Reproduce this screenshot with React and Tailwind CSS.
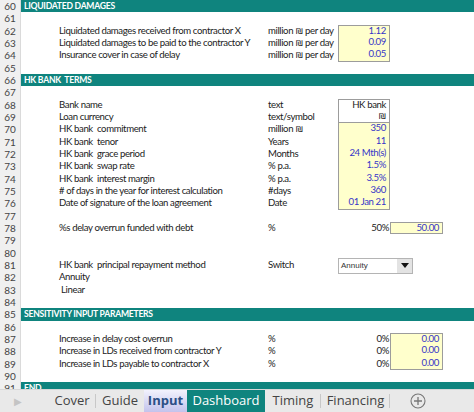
import React from "react";

const rows = [
  { n: 60, header: "LIQUIDATED DAMAGES" },
  { n: 61 },
  { n: 62, label: "Liquidated damages received from contractor X", unit: "million ₪ per day", b1: { v: "1.12", k: "y", top: true } },
  { n: 63, label: "Liquidated damages to be paid to the contractor Y", unit: "million ₪ per day", b1: { v: "0.09", k: "y" } },
  { n: 64, label: "Insurance cover in case of delay", unit: "million ₪ per day", b1: { v: "0.05", k: "y", bottom: true } },
  { n: 65 },
  { n: 66, header: "HK BANK  TERMS" },
  { n: 67 },
  { n: 68, label: "Bank name", unit: "text", b1: { v: "HK bank", k: "w", top: true } },
  { n: 69, label: "Loan currency", unit: "text/symbol", b1: { v: "₪", k: "w", bottom: true } },
  { n: 70, label: "HK bank  commitment", unit: "million ₪", b1: { v: "350", k: "y" } },
  { n: 71, label: "HK bank  tenor", unit: "Years", b1: { v: "11", k: "y" } },
  { n: 72, label: "HK bank  grace period", unit: "Months", b1: { v: "24 Mth(s)", k: "y" } },
  { n: 73, label: "HK bank  swap rate", unit: "% p.a.", b1: { v: "1.5%", k: "y" } },
  { n: 74, label: "HK bank  interest margin", unit: "% p.a.", b1: { v: "3.5%", k: "y" } },
  { n: 75, label: "# of days in the year for interest calculation", unit: "#days", b1: { v: "360", k: "y" } },
  { n: 76, label: "Date of signature of the loan agreement", unit: "Date", b1: { v: "01 Jan 21", k: "y", bottom: true } },
  { n: 77 },
  { n: 78, label: "%s delay overrun funded with debt", unit: "%", b1: { v: "50%", k: "p" }, b2: { v: "50.00", k: "y", top: true, bottom: true } },
  { n: 79 },
  { n: 80 },
  { n: 81, label: "HK bank  principal repayment method", unit: "Switch", dropdown: true },
  { n: 82, label: "Annuity" },
  { n: 83, label: " Linear" },
  { n: 84 },
  { n: 85, header: "SENSITIVITY INPUT PARAMETERS" },
  { n: 86 },
  { n: 87, label: "Increase in delay cost overrun", unit: "%", b1: { v: "0%", k: "p" }, b2: { v: "0.00", k: "y", top: true } },
  { n: 88, label: "Increase in LDs received from contractor Y", unit: "%", b1: { v: "0%", k: "p" }, b2: { v: "0.00", k: "y" } },
  { n: 89, label: "Increase in LDs payable to contractor X", unit: "%", b1: { v: "0%", k: "p" }, b2: { v: "0.00", k: "y", bottom: true } },
  { n: 90 },
  { n: 91, header: "END" },
];

function clsx(...a) {
  return a.filter(Boolean).join(" ");
}

function Cell({ c, w }) {
  if (!c) return <div className={w + " shrink-0"} />;
  if (c.k === "p") {
    return <div className={w + " shrink-0 text-right pr-[1px] text-[#222]"}>{c.v}</div>;
  }
  const bg = c.k === "y" ? "bg-[#ffffcc]" : "bg-white";
  const color = c.k === "y" ? "text-[#3535c8]" : "text-[#222]";
  return (
    <div
      className={clsx(
        w,
        "shrink-0 border-x border-[#9c9c9c] text-right pr-[3px]",
        bg,
        color,
        c.top && "border-t",
        c.bottom && "border-b"
      )}
    >
      <span className="relative top-[-1px]">{c.v}</span>
    </div>
  );
}

function Dropdown() {
  return (
    <div className="absolute left-0 top-[-1px] w-[75px] h-[16px] bg-white border border-[#b4b4b4] flex items-center z-10 tracking-normal">
      <span className="flex-1 pl-[2px] text-[8px] leading-[14px] text-[#333] font-['Liberation_Sans',sans-serif]">Annuity</span>
      <div className="w-[15px] h-full bg-[#e3e3e3] flex items-center justify-center">
        <svg width="8" height="5" viewBox="0 0 8 5">
          <polygon points="0,0 8,0 4,5" fill="#111" />
        </svg>
      </div>
    </div>
  );
}

function Row({ r }) {
  return (
    <div className="flex h-[12.33px] leading-[12.33px] shrink-0">
      <div className="w-[21px] shrink-0 bg-[#f0f0f0] border-r border-[#dadada] text-center text-[10px] text-[#444] tracking-normal">
        {r.n}
      </div>
      {r.header ? (
        <div className="flex-1 bg-[#0f847e] text-white font-bold text-[8.6px] tracking-[-0.25px] pl-[3px] whitespace-pre">
          {r.header}
        </div>
      ) : (
        <>
          <div className="w-[38px] shrink-0" />
          <div className="w-[209px] shrink-0 whitespace-pre text-[#222]">{r.label}</div>
          <div className="w-[70px] shrink-0 whitespace-pre text-[#222]">{r.unit}</div>
          {r.dropdown ? (
            <div className="relative w-[52px] shrink-0">
              <Dropdown />
            </div>
          ) : (
            <Cell c={r.b1} w="w-[52px]" />
          )}
          <Cell c={r.b2} w="w-[53px]" />
        </>
      )}
    </div>
  );
}

function Tab({ label, w, kind, sep = true }) {
  const base = "h-full shrink-0 flex items-center justify-center relative " + w;
  if (kind === "active") {
    return (
      <div className={base + " bg-gradient-to-b from-[#f2f2fd] to-[#c3c3ec] font-bold text-[#2c4f86]"}>
        {label}
      </div>
    );
  }
  if (kind === "teal") {
    return <div className={base + " bg-[#0f847e] text-white"}>{label}</div>;
  }
  return (
    <div className={base + " text-[#444]"}>
      {label}
      {sep && <div className="absolute right-0 top-[4px] bottom-[4px] w-px bg-[#c8c8c8]" />}
    </div>
  );
}

export default function App() {
  return (
    <div className="w-[474px] h-[412px] overflow-hidden bg-white flex flex-col font-['Lato',sans-serif] text-[9.6px]">
      <div className="h-[389px] overflow-hidden flex flex-col shrink-0 tracking-[-0.38px]">
        {rows.map((r) => (
          <Row key={r.n} r={r} />
        ))}
      </div>
      <div className="h-[23px] shrink-0 bg-[#e9e9e9] border-t border-[#d8d8d8] flex items-stretch font-['Open_Sans',sans-serif] text-[13px]">
        <div className="w-[48px] shrink-0 flex items-center pl-[14px] text-[#c4c4c4] text-[10px]">▶</div>
        <Tab label="Cover" w="w-[48px]" />
        <Tab label="Guide" w="w-[48px]" sep={false} />
        <Tab label="Input" w="w-[43px]" kind="active" />
        <Tab label="Dashboard" w="w-[78px]" kind="teal" />
        <Tab label="Timing" w="w-[56px]" />
        <Tab label="Financing" w="w-[69px]" />
        <div className="flex-1 flex items-center pl-[20px]">
          <svg width="16" height="16" viewBox="0 0 16 16">
            <circle cx="8" cy="8" r="7" fill="none" stroke="#777" strokeWidth="1.1" />
            <path d="M8 4v8M4 8h8" stroke="#777" strokeWidth="1.3" />
          </svg>
        </div>
      </div>
    </div>
  );
}
